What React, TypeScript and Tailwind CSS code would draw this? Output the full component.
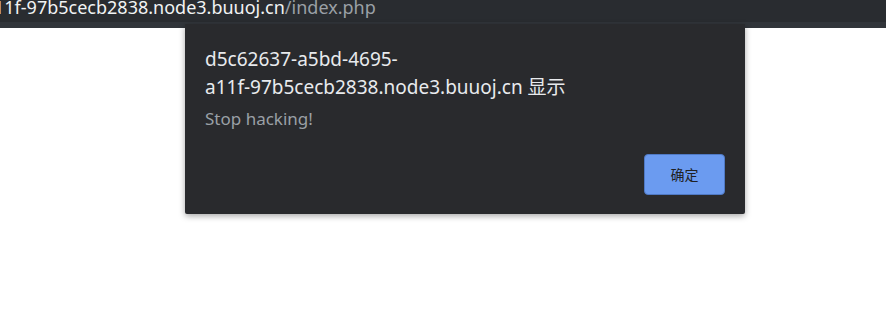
export default function App() {
  return (
    <div className="relative h-[334px] w-[886px] overflow-hidden bg-white" style={{ fontFamily: '"Noto Sans", "Noto Sans CJK SC", sans-serif' }}>
      <div className="h-[22px] overflow-hidden bg-[#292c30]">
        <div className="-mt-[5px] -ml-[6px] whitespace-nowrap text-[18px] leading-[25px]">
          <span className="text-[#f1f3f4]">11f-97b5cecb2838.node3.buuoj.cn</span>
          <span className="text-[#9aa0a6]">/index.php</span>
        </div>
      </div>
      <div className="h-[6px] bg-[#31353a]" />

      <div className="absolute left-[185px] top-[24px] w-[560px] rounded-b-[2px] bg-[#292a2d] shadow-[0_2px_6px_rgba(0,0,0,0.35)]">
        <div className="px-5 pt-[21px]">
          <div className="text-[19px] leading-[28px] text-[#e8eaed]">
            d5c62637-a5bd-4695-
            <br />
            a11f-97b5cecb2838.node3.buuoj.cn 显示
          </div>
          <div className="mt-[7px] text-[17px] leading-[22px] text-[#9aa0a6]">Stop hacking!</div>
        </div>
        <div className="flex justify-end px-5 pb-[19px] pt-[24px]">
          <button className="h-[41px] w-[81px] rounded-[4px] border border-[#4f79c4] bg-[#6b9bf0] text-[14px] text-[#202124]">
            确定
          </button>
        </div>
      </div>
    </div>
  );
}
